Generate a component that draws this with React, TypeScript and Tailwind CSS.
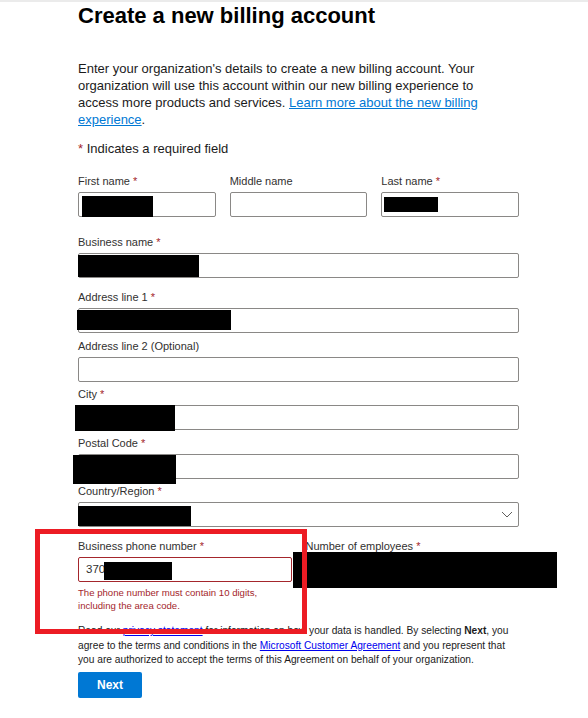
import type { ReactNode } from "react";

const Req = () => <span className="text-[#a4262c]"> *</span>;

function Field({
  label,
  required,
  className = "",
  children,
}: {
  label: string;
  required?: boolean;
  className?: string;
  children?: ReactNode;
}) {
  return (
    <div className={className}>
      <div className="text-[11px] leading-[14px] text-[#323130] pt-[1px] mb-[4px] whitespace-nowrap">
        {label}
        {required && <Req />}
      </div>
      {children ?? <div className="h-[25px] border border-[#8a8886] rounded-[2px] bg-white" />}
    </div>
  );
}

// black redaction boxes, page coordinates
const redactions = [
  { l: 82, t: 194, w: 71, h: 21 },
  { l: 384, t: 195, w: 54, h: 15 },
  { l: 78, t: 253, w: 121, h: 22 },
  { l: 77, t: 308, w: 154, h: 20 },
  { l: 75, t: 403, w: 100, h: 26 },
  { l: 73, t: 453, w: 103, h: 29 },
  { l: 78, t: 504, w: 113, h: 20 },
  { l: 104, t: 560, w: 68, h: 18 },
  { l: 293, t: 550, w: 264, h: 36 },
];

export default function App() {
  return (
    <div className="relative w-[588px] h-[718px] bg-white border-t-2 border-[#ebebeb] overflow-hidden font-['Liberation_Sans',Arial,sans-serif] text-[#1b1b1b]">
      <div className="pl-[78px] w-[519px]">
        <h1 className="text-[22px] leading-[28px] font-bold text-black">Create a new billing account</h1>

        <p className="mt-[30px] w-[410px] text-[13px] leading-[17px]">
          Enter your organization's details to create a new billing account. Your organization will use this account
          within our new billing experience to access more products and services.{" "}
          <a className="text-[#0078d4] underline">Learn more about the new billing experience</a>.
        </p>

        <p className="mt-[12px] text-[13px] leading-[17px]">
          <span className="text-[#a4262c]">*</span> Indicates a required field
        </p>

        {/* name row */}
        <div className="mt-[16px] grid grid-cols-3 gap-[14px]">
          <Field label="First name" required />
          <Field label="Middle name" />
          <Field label="Last name" required />
        </div>

        <Field label="Business name" required className="mt-[17px]" />
        <Field label="Address line 1" required className="mt-[11px]" />
        <Field label="Address line 2 (Optional)" className="mt-[5px]" />
        <Field label="City" required className="mt-[4px]" />
        <Field label="Postal Code" required className="mt-[5px]" />
        <Field label="Country/Region" required className="mt-[4px]">
          <div className="h-[25px] border border-[#8a8886] rounded-[2px] bg-white flex items-center justify-end pr-[5px]">
            <svg width="12" height="7" viewBox="0 0 12 7" fill="none">
              <polyline points="1,1 6,6 11,1" stroke="#605e5c" strokeWidth="1" />
            </svg>
          </div>
        </Field>

        {/* phone + employees */}
        <div className="mt-[11px] grid grid-cols-2 gap-[14px]">
          <Field label="Business phone number" required>
            <div className="h-[25px] border border-[#a4262c] rounded-[2px] bg-white flex items-center pl-[7px] text-[11.5px] text-[#323130]">
              370
            </div>
            <div className="mt-[4px] text-[9.6px] leading-[13px] text-[#a4262c]">
              The phone number must contain 10 digits,
              <br />
              including the area code.
            </div>
          </Field>
          <Field label="Number of employees" required />
        </div>

        <p className="mt-[12px] w-[442px] text-[10.2px] leading-[14.5px]">
          Read our <a className="text-[#0000ee] underline">privacy statement</a> for information on how your data is
          handled. By selecting <b>Next</b>, you agree to the terms and conditions in the{" "}
          <a className="text-[#0000ee] underline">Microsoft Customer Agreement</a> and you represent that you are
          authorized to accept the terms of this Agreement on behalf of your organization.
        </p>

        <button className="mt-[4px] w-[64px] h-[26px] rounded-[2px] bg-[#0078d4] text-white text-[12px] font-bold">
          Next
        </button>
      </div>

      {redactions.map((r, i) => (
        <div
          key={i}
          className="absolute bg-black"
          style={{ left: r.l, top: r.t, width: r.w, height: r.h }}
        />
      ))}

      {/* annotation box */}
      <div className="absolute left-[35px] top-[527px] w-[272px] h-[105px] border-[5px] border-[#ec1c24]" />
    </div>
  );
}
